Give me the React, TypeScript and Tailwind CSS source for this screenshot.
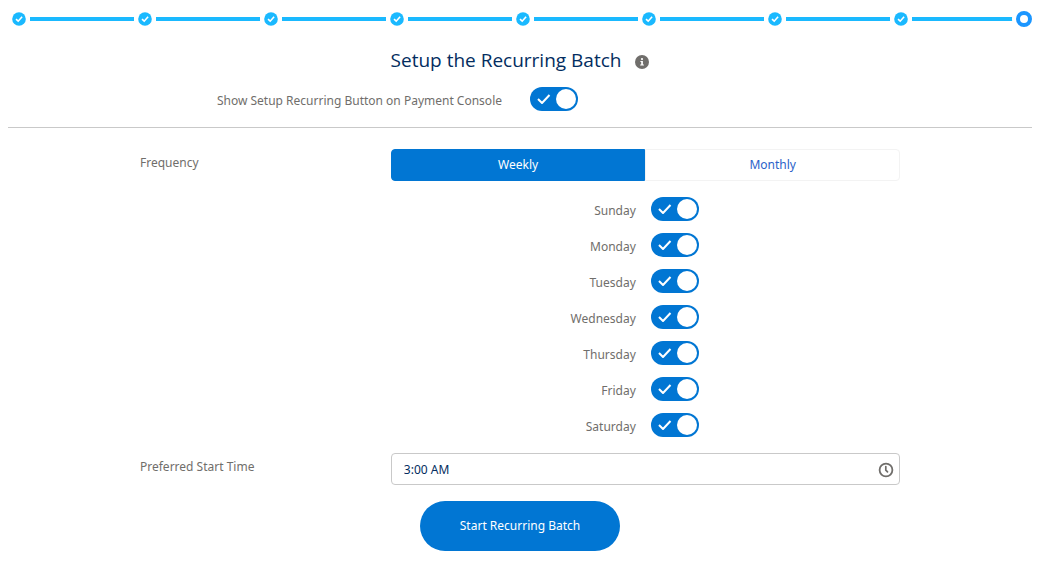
import { useState } from "react";

const DAYS = ["Sunday", "Monday", "Tuesday", "Wednesday", "Thursday", "Friday", "Saturday"];
const COMPLETED_STEPS = [1, 2, 3, 4, 5, 6, 7, 8];

function StepCheck() {
  return (
    <svg viewBox="0 0 14 14" className="size-[14px] shrink-0" aria-hidden="true">
      <circle cx="7" cy="7" r="6.8" fill="#1ab9ff" />
      <path d="M4 7.2 6.2 9.2 10.1 4.8" fill="none" stroke="#fff" strokeWidth="1.6" />
    </svg>
  );
}

function Progress() {
  return (
    <ol className="flex h-[22px] items-center pl-1" aria-label="Setup progress">
      {COMPLETED_STEPS.map((step) => (
        <li key={step} className="flex flex-1 items-center gap-1 pr-1">
          <StepCheck />
          <span className="h-1 flex-1 bg-[#1ab9ff]" />
        </li>
      ))}
      <li
        aria-current="step"
        className="relative -ml-1 size-4 rounded-full border-4 border-[#1b96ff] bg-white ring-4 ring-white"
      />
    </ol>
  );
}

function Toggle({ id }: { id: string }) {
  return (
    <span className="relative block h-6 w-12 shrink-0">
      <input
        id={id}
        type="checkbox"
        defaultChecked
        className="peer block h-6 w-12 cursor-pointer appearance-none rounded-full bg-[#b0adab] checked:bg-[#0176d3]"
      />
      <span className="pointer-events-none absolute top-[2px] left-[2px] size-5 rounded-full bg-white peer-checked:left-[26px]" />
      <svg
        viewBox="0 0 14 12"
        className="pointer-events-none absolute top-[6px] left-[7px] hidden h-3 w-[14px] peer-checked:block"
        aria-hidden="true"
      >
        <path d="M1 6 5 10 12.5 2" fill="none" stroke="#fff" strokeWidth="2" strokeLinejoin="round" />
      </svg>
    </span>
  );
}

function InfoIcon() {
  return (
    <svg viewBox="0 0 14 14" className="size-[14px]" aria-hidden="true">
      <circle cx="7" cy="7" r="7" fill="#706e6b" />
      <circle cx="7" cy="4.1" r="1.1" fill="#fff" />
      <path d="M5.4 6H7.9V9.4H8.9V10.4H5.2V9.4H6.2V7H5.4Z" fill="#fff" />
    </svg>
  );
}

function ClockIcon() {
  return (
    <svg viewBox="0 0 16 16" className="pointer-events-none absolute top-[9px] right-[6px] size-4" aria-hidden="true">
      <circle cx="8" cy="8" r="6.4" fill="none" stroke="#706e6b" strokeWidth="1.8" />
      <path d="M7.8 4.5V8.2L9.5 9.9" fill="none" stroke="#706e6b" strokeWidth="1.7" strokeLinecap="round" />
    </svg>
  );
}

export default function App() {
  const [frequency, setFrequency] = useState("Weekly");

  return (
    <main className="bg-white px-2 pt-2 pr-3 font-['Noto_Sans',sans-serif] text-[12px] leading-5 text-[#706e6b]">
      <Progress />

      <header className="border-b border-[#c9c9c9] pb-4">
        <div className="flex items-center justify-center gap-[14px] pt-4">
          <h1 className="font-['Open_Sans',sans-serif] text-[19px] leading-7 text-[#032d60]">
            Setup the Recurring Batch
          </h1>
          <button type="button" aria-label="More information" className="pt-1">
            <InfoIcon />
          </button>
        </div>
        <div className="mx-auto flex max-w-[760px] items-center gap-7 pt-[13px]">
          <label htmlFor="show-button" className="w-[362px] pt-1 text-right">
            Show Setup Recurring Button on Payment Console
          </label>
          <Toggle id="show-button" />
        </div>
      </header>

      <form
        className="mx-auto grid max-w-[760px] grid-cols-[33%_1fr] gap-y-4 pt-[21px]"
        onSubmit={(event) => event.preventDefault()}
      >
        <span id="frequency" className="pt-1">Frequency</span>
        <div>
          <div role="group" aria-labelledby="frequency" className="flex h-8">
            {["Weekly", "Monthly"].map((option) => (
              <button
                key={option}
                type="button"
                aria-pressed={frequency === option}
                onClick={() => setFrequency(option)}
                className="flex-1 cursor-pointer border border-[#f3f3f3] text-[#2b62c9] first:rounded-l last:rounded-r aria-pressed:border-[#0176d3] aria-pressed:bg-[#0176d3] aria-pressed:text-white"
              >
                {option}
              </button>
            ))}
          </div>
          <div className="flex flex-col gap-3 pt-4">
            {DAYS.map((day) => (
              <div key={day} className="flex h-6 items-center gap-[15px]">
                <label htmlFor={day} className="w-[245px] pt-1 text-right">{day}</label>
                <Toggle id={day} />
              </div>
            ))}
          </div>
        </div>

        <label htmlFor="start-time" className="pt-1">Preferred Start Time</label>
        <div className="relative">
          <input
            id="start-time"
            type="text"
            defaultValue="3:00 AM"
            className="block h-8 w-full rounded border border-[#c9c9c9] bg-white pr-8 pl-3 text-[#032d60]"
          />
          <ClockIcon />
        </div>

        <div className="col-span-2 flex justify-center">
          <button type="submit" className="h-[50px] w-[200px] cursor-pointer rounded-full bg-[#0176d3] text-white">
            Start Recurring Batch
          </button>
        </div>
      </form>
    </main>
  );
}
